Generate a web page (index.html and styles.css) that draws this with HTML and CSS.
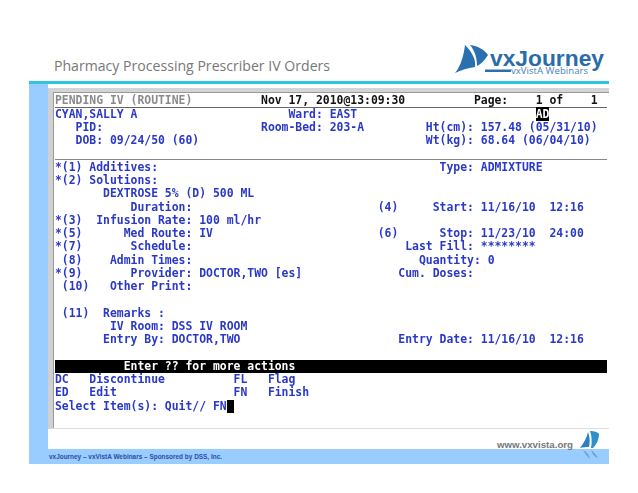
FILE: index.html
```html
<!DOCTYPE html>
<html lang="en">
<head>
    <meta charset="UTF-8">
    <meta name="viewport" content="width=device-width, initial-scale=1.0">
    <title>Pharmacy Processing Prescriber IV Orders</title>
    <link rel="stylesheet" href="styles.css">
</head>
<body>
    <div class="slide">
        <!-- Slide header -->
        <div class="slide-head">
            <h1 class="slide-title">Pharmacy Processing Prescriber IV Orders</h1>
            <svg class="logo" width="152" height="34" viewBox="0 0 152 34">
                <path d="M1 31 C7 24 10 12 11 3 C19 11 22 18 21 25 C14 26 7 28 1 31 Z" fill="#2a70b0"/>
                <path d="M16 3 C24 4 31 8 34 13 C31 18 27 22 23 24 C23 16 21 9 16 3 Z" fill="#2a70b0"/>
                <text class="logo-name" x="36" y="24" textLength="114" lengthAdjust="spacingAndGlyphs">vxJourney</text>
                <rect x="31" y="27.5" width="26" height="2.5" fill="#2a70b0"/>
                <text class="logo-sub" x="57" y="32" textLength="77" lengthAdjust="spacingAndGlyphs">vxVistA Webinars</text>
            </svg>
        </div>

        <div class="slide-body">
            <div class="side-band"></div>
            <div class="slide-main">
                <!-- Terminal capture -->
                <div class="screen">
                    <div class="term">
                        <div class="line line-head"><span class="dim">PENDING IV (ROUTINE)</span>          Nov 17, 2010@13:09:30          Page:    1 of    1</div>
                        <div class="line">CYAN,SALLY A                      Ward: EAST                          <span class="inverse">AD</span></div>
                        <div class="line">   PID:                       Room-Bed: 203-A         Ht(cm): 157.48 (05/31/10)</div>
                        <div class="line">   DOB: 09/24/50 (60)                                 Wt(kg): 68.64 (06/04/10)</div>
                        <div class="line line-rule"></div>
                        <div class="line">*(1) Additives:                                         Type: ADMIXTURE</div>
                        <div class="line">*(2) Solutions:</div>
                        <div class="line">       DEXTROSE 5% (D) 500 ML</div>
                        <div class="line">           Duration:                           (4)     Start: 11/16/10  12:16</div>
                        <div class="line">*(3)  Infusion Rate: 100 ml/hr</div>
                        <div class="line">*(5)      Med Route: IV                        (6)      Stop: 11/23/10  24:00</div>
                        <div class="line">*(7)       Schedule:                               Last Fill: ********</div>
                        <div class="line"> (8)    Admin Times:                                 Quantity: 0</div>
                        <div class="line">*(9)       Provider: DOCTOR,TWO [es]              Cum. Doses:</div>
                        <div class="line"> (10)   Other Print:</div>
                        <div class="line"></div>
                        <div class="line"> (11)  Remarks :</div>
                        <div class="line">        IV Room: DSS IV ROOM</div>
                        <div class="line">       Entry By: DOCTOR,TWO                       Entry Date: 11/16/10  12:16</div>
                        <div class="line"></div>
                        <div class="line line-bar">          Enter ?? for more actions</div>
                        <div class="line">DC   Discontinue          FL   Flag</div>
                        <div class="line">ED   Edit                 FN   Finish</div>
                        <div class="line">Select Item(s): Quit// FN<span class="cursor"></span></div>
                    </div>
                </div>

                <div class="site-row">
                    <span class="site-url">www.vxvista.org</span>
                    <svg class="site-mark" width="20" height="30" viewBox="0 0 20 30">
                        <path d="M0 18 C4 13 7 7 8 2 C10 7 10 13 9 17 C6 17 3 17 0 18 Z" fill="#2a80c0"/>
                        <path d="M10 1 C14 1 18 2 19 4 C19 10 16 15 13 18 L11 18 C12 12 12 6 10 1 Z" fill="#2f8fc8"/>
                        <path d="M3 20 C7 22 9 25 10 29 C8 27 5 24 3 20 Z M11 20 C14 22 16 25 18 28 C15 27 12 24 11 20 Z" fill="#6f9fc4"/>
                    </svg>
                </div>
            </div>
        </div>

        <div class="slide-foot">vxJourney – vxVistA Webinars – Sponsored by DSS, Inc.</div>
    </div>
</body>
</html>
```

FILE: styles.css
```css
body {
    margin: 0;
    background: #fff;
    font-family: "Liberation Sans", Arial, sans-serif;
}

.slide {
    width: 580px;
    margin-left: 29px;
}

/* Slide header */
.slide-head {
    height: 81px;
    display: flex;
    justify-content: space-between;
    align-items: flex-end;
    border-bottom: 3px solid #2ec4e2;
}

.slide-title {
    margin: 0 0 5px 25px;
    color: #777;
    font-family: "Open Sans", sans-serif;
    font-size: 14.1px;
    font-weight: 400;
    line-height: 20px;
    white-space: nowrap;
}

.logo {
    margin: 0 3px 5px 0;
}

.logo-name {
    fill: #2a6cab;
    font-family: "Liberation Sans", Arial, sans-serif;
    font-size: 22px;
    font-weight: 700;
}

.logo-sub {
    fill: #4a82b5;
    font-family: "Open Sans", sans-serif;
    font-size: 9.5px;
}

.slide-body {
    display: flex;
}

.side-band {
    width: 19px;
    background: #99ccff;
}

.slide-main {
    flex: 1;
    min-width: 0;
}

/* Terminal capture */
.screen {
    margin-top: 4px;
    padding: 2.4px 2px 15px 2px;
    border-top: 4px solid #d4d4d4;
    border-left: 5px solid #d0d0d0;
    border-bottom: 1px solid #ddd;
    box-shadow: inset 1px 1px 0 #999;
}

.term {
    color: #2a38c8;
    font-family: "DejaVu Sans Mono", monospace;
    font-size: 11.41px;
    font-weight: 700;
    filter: blur(0.3px);
}

.line {
    height: 13.27px;
    line-height: 13.27px;
    box-sizing: border-box;
    white-space: pre;
}

.line-head {
    color: #111;
    border-bottom: 1px solid #666;
}

.line-rule {
    border-bottom: 1px solid #888;
    transform: translateY(-1px);
}

.line-bar {
    background: #000;
    color: #fff;
}

.dim {
    color: #8a8a8a;
}

.inverse {
    background: #000;
    color: #fff;
}

.cursor {
    display: inline-block;
    width: 7px;
    height: 13px;
    background: #000;
    vertical-align: top;
}

.site-row {
    height: 20px;
    display: flex;
    justify-content: flex-end;
    align-items: flex-end;
}

.site-url {
    margin: 0 7px -3px 0;
    color: #777;
    font-size: 9.7px;
    font-weight: 700;
    line-height: 14px;
}

.site-mark {
    margin: 0 9px -11px 0;
    position: relative;
}

/* Slide footer */
.slide-foot {
    height: 15px;
    padding-left: 20px;
    background: #99ccff;
    color: #2a4ca4;
    font-size: 6.45px;
    font-weight: 700;
    line-height: 15px;
}
```
